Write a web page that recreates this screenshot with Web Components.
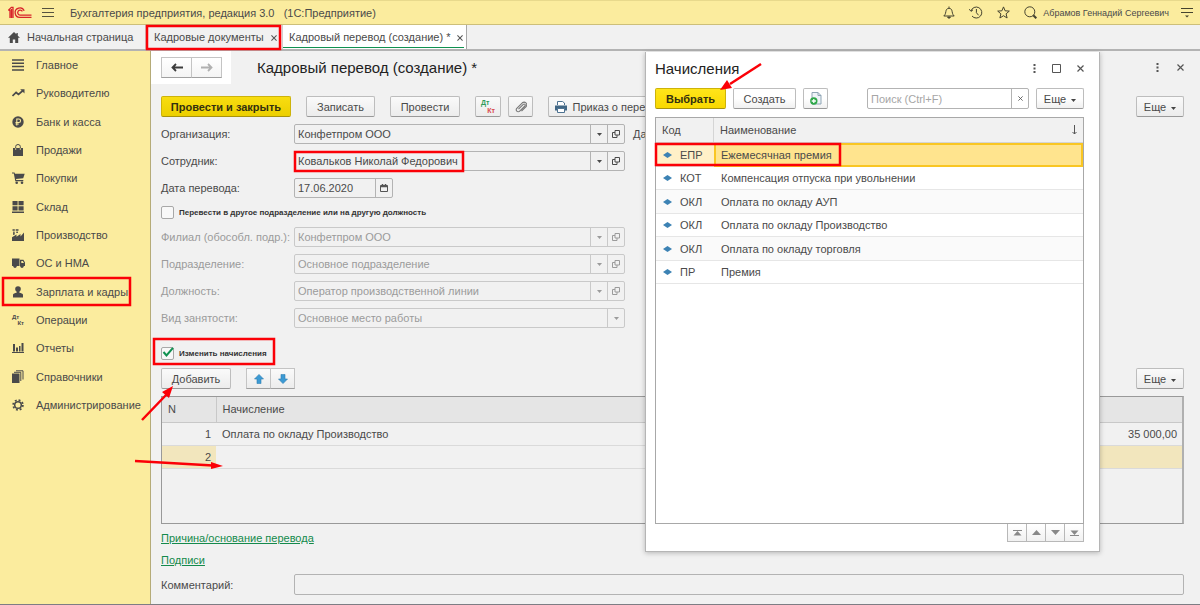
<!DOCTYPE html>
<html lang="ru">
<head>
<meta charset="utf-8">
<title>Бухгалтерия предприятия</title>
<style>
    html, body { margin: 0; }
    body {
        font: 11px/14px "Liberation Sans", Arial, sans-serif;
        color: #4a4a4a;
        --line: #b3b3b3;
        --bg: #f1f1f1;
        --yellow: #fbec9e;
    }
</style>
</head>
<body>
<app-shell>
    <title-bar slot="title"></title-bar>
    <tab-bar slot="tabs"></tab-bar>
    <side-nav slot="nav"></side-nav>
    <transfer-form></transfer-form>
    <accrual-dialog slot="overlay"></accrual-dialog>
    <mark-layer slot="overlay"></mark-layer>
</app-shell>

<script>
const ICONS = {
    logo: '<svg width="24" height="13" viewBox="0 0 24 13" fill="none" stroke="#d8232a" stroke-width="1.300"><path d="M.4 4.300H2V12M.4 4.300 3.400 1.300H5V12M3.500 3V12"/><path d="M16.200 4.800A4.700 4.700 0 1 0 12 11.300H23.500"/><path d="M14.400 5.400A2.500 2.500 0 1 0 12 9.100H23.500"/></svg>',
    burger: '<svg width="12" height="11" viewBox="0 0 12 11" stroke="#55523f"><path d="M0 1.500h12M0 5.500h12M0 9.500h12"/></svg>',
    bell: '<svg width="12" height="13" viewBox="0 0 12 13" fill="none" stroke="#45432f"><path d="M.8 10C2.800 8.500 2.600 6 3.200 4.200 3.700 2.800 4.800 2.400 6 2.400s2.300.400 2.800 1.800c.600 1.800.400 4.300 2.400 5.800ZM6 .5v2"/><path d="M4.500 11h3L6 12.500Z" fill="#45432f"/></svg>',
    history: '<svg width="14" height="13" viewBox="0 0 14 13" fill="none" stroke="#45432f"><path d="M2 5A5.500 5.500 0 1 1 3 10M.3 3.200 2 5.400 4 3.800M7.400 3v3.700l2.200 2.600"/></svg>',
    star: '<svg width="13" height="13" viewBox="0 0 13 13" fill="none" stroke="#45432f"><path d="m6.500.900 1.600 3.900 4.200.300-3.200 2.700 1 4.200-3.600-2.300L2.900 12l1-4.200L.7 5.100l4.200-.3Z"/></svg>',
    search: '<svg width="13" height="13" viewBox="0 0 13 13" fill="none" stroke="#45432f"><circle cx="5.800" cy="5.800" r="5"/><path d="m9.300 9.300 3 3" stroke-width="2"/></svg>',
    settings: '<svg width="12" height="11" viewBox="0 0 12 11" stroke="#45432f"><path d="M0 1.500h12M0 5.500h12"/><path d="M4 8.500h4L6 10.500Z" fill="#45432f" stroke="none"/></svg>',
    home: '<svg width="12" height="11" viewBox="0 0 12 11" fill="#4a4a4a"><path d="M6 0 0 5.800h1.800V11h3V7.500h2.400V11h3V5.800H12L9.800 3.700V1H8.400v1.300Z"/></svg>',
    main: '<svg width="12" height="12" viewBox="0 0 12 12" stroke="#4a4a4a" stroke-width="1.500"><path d="M0 1h12M0 4.300h12M0 7.600h12M0 10.900h12"/></svg>',
    trend: '<svg width="13" height="12" viewBox="0 0 13 12" fill="none" stroke="#4a4a4a" stroke-width="1.700"><path d="m.5 9 3.600-3.500 2.400 2L11 3.500"/><path d="M8.200 2.300h4.300v4.200Z" fill="#4a4a4a" stroke="none"/></svg>',
    ruble: '<svg width="12" height="12" viewBox="0 0 12 12"><circle cx="6" cy="6" r="5.700" fill="#4a4a4a"/><path d="M4.800 9.500V3h2a1.700 1.700 0 0 1 0 3.500H3.500M3.500 8h3.300" fill="none" stroke="#fbec9e" stroke-width="1.100"/></svg>',
    bag: '<svg width="12" height="12" viewBox="0 0 12 12"><path d="M1 4h10v8H1Z" fill="#4a4a4a"/><path d="M3.700 6V2.500a2.300 2 0 0 1 4.600 0V6" fill="none" stroke="#4a4a4a"/><path d="M3.700 4v2M8.300 4v2" stroke="#fbec9e" stroke-width=".7"/></svg>',
    cart: '<svg width="13" height="12" viewBox="0 0 13 12" fill="#4a4a4a"><path d="M0 .5h2.500l.5 1.200h9.700l-1.500 4.600-7.300.700.400 1h7v1.200H3.300L1.800 1.600H0Z"/><circle cx="4.700" cy="10.700" r="1.300"/><circle cx="10" cy="10.700" r="1.300"/></svg>',
    store: '<svg width="12" height="12" viewBox="0 0 12 12" fill="#4a4a4a"><path d="M.5 0h5.100v4.300H.5ZM6.500 0h5.100v4.300H6.500ZM.5 5.200h5.100v4.300H.5ZM6.500 5.200h5.100v4.300H6.500ZM0 10.500h12V12H0Z"/></svg>',
    factory: '<svg width="12" height="12" viewBox="0 0 12 12" fill="#4a4a4a"><path d="M0 12V8.200l4.500-2.700v2.300L8.500 5v2.500L12 3.500V12ZM1 6 1.300 2.500h1.200L2.800 5.500ZM4.200 4l.3-1.500h1.200L6 4ZM.5.300h2.300v1.400H.5ZM3.700.3h2.800v1.400H3.700Z"/></svg>',
    truck: '<svg width="13" height="12" viewBox="0 0 13 12" fill="#4a4a4a"><path d="M0 1.500h7.500V9H0ZM8 2.800h3.400L13 5.500V9H8Z"/><circle cx="3" cy="9.300" r="1.600"/><circle cx="10" cy="9.300" r="1.600"/><path d="M9.300 4h1.500L12 6H9.300Z" fill="#fbec9e"/></svg>',
    person: '<svg width="12" height="12" viewBox="0 0 12 12" fill="#4a4a4a"><circle cx="6" cy="3" r="2.800"/><path d="M1 11.500V8.800C1 7.600 3 7 4.600 6.700V5h2.800v1.700C9 7 11 7.600 11 8.800v2.700Z"/></svg>',
    chart: '<svg width="12" height="12" viewBox="0 0 12 12" fill="#4a4a4a"><path d="M1 2h2v7.500H1ZM4 5.500h2v4H4ZM7 4h1.500v5.500H7ZM9.500 1h2v8.500h-2ZM0 10h12v1H0Z"/></svg>',
    books: '<svg width="12" height="13" viewBox="0 0 12 13" fill="#4a4a4a"><path d="M0 3.500h7.500V13H0Z"/><path d="M2 2.300h6.800V11M4 .8h7v8.700" fill="none" stroke="#4a4a4a"/></svg>',
    gear: '<svg width="12" height="12" viewBox="0 0 12 12" fill="none" stroke="#4a4a4a"><circle cx="6" cy="6" r="3.300" stroke-width="1.500"/><circle cx="6" cy="6" r="4.900" stroke-width="1.700" stroke-dasharray="1.900 1.950"/></svg>',
    back: '<svg width="12" height="9" viewBox="0 0 12 9" fill="none" stroke="#3c3c3c" stroke-width="1.800"><path d="M1.500 4.500H12M5 1 1.500 4.500 5 8"/></svg>',
    forward: '<svg width="12" height="9" viewBox="0 0 12 9" fill="none" stroke="#b0b0b0" stroke-width="1.800"><path d="M0 4.500h10.500M7 1l3.500 3.500L7 8"/></svg>',
    clip: '<svg width="12" height="12" viewBox="0 0 12 12" fill="none" stroke="#777" stroke-width="1.100"><path d="m3.500 8.200 4.800-4.800a1.100 1.100 0 0 1 1.600 1.600L4.700 10.200a2 2 0 0 1-2.900-2.900L7.300 1.800a2.700 2.700 0 0 1 3.800 3.800L6.500 10.200"/></svg>',
    print: '<svg width="12" height="12" viewBox="0 0 12 12"><path d="M2.500 4V.5h5L9.500 2v2" fill="#fff" stroke="#4d7291"/><path d="M0 4.500h12V9.500H0Z" fill="#416785"/><path d="M2.500 7.500h7v4h-7Z" fill="#fff" stroke="#4d7291"/></svg>',
    drop: '<svg width="5" height="3" viewBox="0 0 5 3" fill="currentColor"><path d="M0 0h5L2.500 3Z"/></svg>',
    open: '<svg width="8" height="8" viewBox="0 0 8 8" fill="none" stroke="currentColor"><path d="M3 .5h4.500V5H3ZM3 2.500H.5v5H5V5"/></svg>',
    calendar: '<svg width="8" height="8" viewBox="0 0 8 8" fill="none" stroke="#555"><path d="M.5 1.500h7v6h-7Z"/><path d="M.5 2.500h7M2.500 0v2M5.500 0v2" stroke-width="1.500"/></svg>',
    check: '<svg width="12" height="11" viewBox="0 0 12 11" fill="none" stroke="#0f9150" stroke-width="2"><path d="m1.500 5 3 3.500L11 .8"/></svg>',
    up: '<svg width="10" height="10" viewBox="0 0 10 10" fill="#3c9ad4" stroke="#2b7cb0" stroke-width=".6"><path d="M5 .4 9.500 5H7v4.600H3V5H.5Z"/></svg>',
    down: '<svg width="10" height="10" viewBox="0 0 10 10" fill="#3c9ad4" stroke="#2b7cb0" stroke-width=".6"><path d="M5 9.600.5 5H3V.4h4V5h2.500Z"/></svg>',
    dots: '<svg width="3" height="9" viewBox="0 0 3 9" fill="#555"><path d="M.5 0h2v2h-2ZM.5 3.500h2v2h-2ZM.5 7h2v2h-2Z"/></svg>',
    close: '<svg width="7" height="7" viewBox="0 0 7 7" fill="none" stroke="#555" stroke-width="1.200"><path d="m.5.500 6 6M6.500.500l-6 6"/></svg>',
    max: '<svg width="9" height="9" viewBox="0 0 9 9" fill="none" stroke="#555"><path d="M.5.500h8v8h-8Z"/></svg>',
    copy: '<svg width="12" height="13" viewBox="0 0 12 13"><path d="M2 .5h6L11 3.500v8.500H2Z" fill="#eef3f7" stroke="#8fa5b5"/><path d="M8 .5v3h3" fill="none" stroke="#8fa5b5"/><circle cx="3.800" cy="9" r="3.700" fill="#2fa84a"/><path d="M3.800 6.900v4.200M1.700 9h4.200" stroke="#fff" stroke-width="1.300"/></svg>',
    diamond: '<svg width="9" height="6" viewBox="0 0 9 6" fill="#3c82b4"><path d="M4.500 0 9 3 4.500 6 0 3Z"/></svg>',
    sort: '<svg width="5" height="10" viewBox="0 0 5 10" fill="none" stroke="#555"><path d="M2.500 0v9M.5 7l2 2 2-2"/></svg>',
    first: '<svg width="9" height="6" viewBox="0 0 9 6" fill="#888"><path d="M0 0h9v1H0ZM4.500 1 8.500 5.500h-8Z"/></svg>',
    prev: '<svg width="9" height="5" viewBox="0 0 9 5" fill="#888"><path d="M4.500 0 9 5H0Z"/></svg>',
    next: '<svg width="9" height="5" viewBox="0 0 9 5" fill="#888"><path d="M4.500 5 0 0h9Z"/></svg>',
    last: '<svg width="9" height="6" viewBox="0 0 9 6" fill="#888"><path d="M0 5h9v1H0ZM4.500 5 .5.500h8Z"/></svg>'
};

class BaseElement extends HTMLElement {
    connectedCallback() {
        if (this.shadowRoot) return;
        this.attachShadow({ mode: 'open' }).innerHTML = `
            <style>
                *, :host { box-sizing: border-box; }
                svg { display: block; flex: none; }
                button, input { font: inherit; color: inherit; margin: 0; padding: 0; }
                .plain { border: 0; background: none; display: grid; place-items: center; }
            </style>
            ${this.render()}`;
    }
}

class AppShell extends BaseElement {
    render() {
        return `
            <style>
                :host { display: flex; flex-direction: column; position: relative; min-height: 100vh; background: var(--bg); border-bottom: 1px solid #7d7d84; }
                .body { display: flex; flex: 1; }
                slot:not([name])::slotted(*) { flex: 1; min-width: 0; }
            </style>
            <slot name="title"></slot>
            <slot name="tabs"></slot>
            <div class="body"><slot name="nav"></slot><slot></slot></div>
            <slot name="overlay"></slot>`;
    }
}

class TitleBar extends BaseElement {
    render() {
        return `
            <style>
                :host { display: flex; align-items: center; height: 25px; padding: 0 7px 0 8px; background: var(--yellow); border-top: 1px solid #e8d98c; border-bottom: 1px solid #cdbf79; }
                .menu { margin: 0 16px 0 10px; }
                .name { white-space: pre; flex: 1; }
                .tools { display: flex; gap: 14px; align-items: center; }
                .user { font-size: 9px; margin: 0 -2px 0 -8px; }
            </style>
            ${ICONS.logo}
            <button class="plain menu" aria-label="Меню">${ICONS.burger}</button>
            <span class="name">Бухгалтерия предприятия, редакция 3.0   (1С:Предприятие)</span>
            <div class="tools">
                <button class="plain" aria-label="Уведомления">${ICONS.bell}</button>
                <button class="plain" aria-label="История">${ICONS.history}</button>
                <button class="plain" aria-label="Избранное">${ICONS.star}</button>
                <button class="plain" aria-label="Поиск">${ICONS.search}</button>
                <span class="user">Абрамов Геннадий Сергеевич</span>
                <button class="plain" aria-label="Настройки">${ICONS.settings}</button>
            </div>`;
    }
}

class TabBar extends BaseElement {
    render() {
        return `
            <style>
                :host { display: flex; height: 26px; background: var(--bg); border-bottom: 2px solid var(--line); }
                .tab { display: flex; align-items: center; gap: 7px; padding: 0 8px; border-right: 1px solid #d0d0d0; }
                .home { width: 146px; }
                .docs { width: 137px; padding-right: 9px; }
                .docs span, .active span { flex: 1; white-space: nowrap; }
                .active { width: 184px; padding: 0 6px; border-color: #a8a8a8; background: linear-gradient(#0f9150, #0f9150) 0 22px / 181px 1px no-repeat #fff; }
                .tab .plain svg { width: 6px; height: 6px; margin-top: 2px; }
            </style>
            <div class="tab home">${ICONS.home}<span>Начальная страница</span></div>
            <div class="tab docs"><span>Кадровые документы</span><button class="plain" aria-label="Закрыть">${ICONS.close}</button></div>
            <div class="tab active"><span>Кадровый перевод (создание) *</span><button class="plain" aria-label="Закрыть">${ICONS.close}</button></div>`;
    }
}

class SideNav extends BaseElement {
    render() {
        const items = [
            ['main', 'Главное'], ['trend', 'Руководителю'], ['ruble', 'Банк и касса'], ['bag', 'Продажи'],
            ['cart', 'Покупки'], ['store', 'Склад'], ['factory', 'Производство'], ['truck', 'ОС и НМА'],
            ['person', 'Зарплата и кадры'], ['dtkt', 'Операции'], ['chart', 'Отчеты'], ['books', 'Справочники'],
            ['gear', 'Администрирование']
        ];
        return `
            <style>
                :host { display: block; flex: none; width: 151px; background: var(--yellow); border-right: 1px solid #b5ab78; }
                nav { display: grid; grid-auto-rows: 1fr; min-height: 368px; }
                a { display: flex; align-items: center; gap: 12px; padding-left: 12px; color: inherit; text-decoration: none; }
                .pic { width: 12px; flex: none; }
                .dtkt { font: bold 6px/6px "Liberation Sans", Arial, sans-serif; }
                .dtkt i { display: block; font-style: normal; text-align: right; }
                .dtkt i:first-child { text-align: left; }
            </style>
            <nav>${items.map(([icon, text]) => `
                <a href="#"><span class="pic ${icon}">${ICONS[icon] || '<i>Дт</i><i>Кт</i>'}</span>${text}</a>`).join('')}
            </nav>`;
    }
}

class ToolButton extends BaseElement {
    render() {
        const icon = this.getAttribute('icon');
        return `
            <style>
                :host { display: inline-block; flex: none; }
                button {
                    display: flex; align-items: center; justify-content: center; gap: 6px;
                    width: 100%; height: 21px; white-space: nowrap;
                    border: 1px solid #bdbdbd; border-bottom-color: #999; border-radius: 2px;
                    background: linear-gradient(#fafafa, #ececec);
                }
                :host([primary]) button {
                    font-weight: bold; color: #33300f; border-color: #cdb30a; border-bottom-color: #a8930c;
                    background: linear-gradient(#f8dd10, #eccf00);
                }
                :host([bright]) button { background: linear-gradient(#ffe51a, #f9d800); }
                :host([white]) button { background: linear-gradient(#fff 50%, #f0f0f0); }
                :host([more]) { width: 48px; }
                .caret { margin: 3px 0 0 -1px; color: #444; }
            </style>
            <button aria-label="${this.getAttribute('hint') || this.textContent.trim()}">${icon ? ICONS[icon] : ''}<slot></slot>${this.hasAttribute('more') ? `<span class="caret">${ICONS.drop}</span>` : ''}</button>`;
    }
}

class FormField extends BaseElement {
    render() {
        const off = this.hasAttribute('off') ? 'disabled' : '';
        const actions = (this.getAttribute('actions') || '').split(' ').filter(Boolean);
        return `
            <style>
                :host { display: grid; grid-template-columns: 133px minmax(0, 1fr); align-items: center; }
                :host([off]) { color: #9b9b9b; --line: #c9c9c9; }
                .box { display: flex; height: 20px; border: 1px solid var(--line); border-radius: 2px; }
                input { flex: 1; min-width: 0; width: 0; border: 0; background: none; padding: 0 3px; outline: 0; }
                :host([tall]) .box { height: 21px; }
                .box button { width: 17px; border-left: 1px solid var(--line); }
            </style>
            <label for="f">${this.getAttribute('label')}</label>
            <div class="box">
                <input id="f" value="${this.getAttribute('value') || ''}" ${off}>
                ${actions.map(a => `<button class="plain" aria-label="${a}" ${off}>${ICONS[a]}</button>`).join('')}
            </div>`;
    }
}

class CheckField extends BaseElement {
    render() {
        return `
            <style>
                :host { display: block; }
                label { display: flex; align-items: center; gap: 5px; font: bold 8px/13px "Liberation Sans", Arial, sans-serif; color: #333; }
                .box { display: grid; }
                .box > * { grid-area: 1 / 1; }
                input { appearance: none; width: 13px; height: 13px; border: 1px solid #a8a8a8; border-radius: 2px; background: #f8f8f8; }
                svg { display: none; pointer-events: none; margin-left: 1px; }
                input:checked + svg { display: block; }
            </style>
            <label><span class="box"><input type="checkbox" ${this.hasAttribute('checked') ? 'checked' : ''}>${ICONS.check}</span><slot></slot></label>`;
    }
}

class TransferForm extends BaseElement {
    render() {
        return `
            <style>
                :host { display: block; padding: 0 16px 8px 10px; }
                header { display: flex; align-items: center; height: 33px; margin-left: -10px; }
                .history { align-self: stretch; background: #fff; padding: 6px 9px 6px 10px; display: flex; }
                .history button, .move button { width: 31px; height: 21px; border: 1px solid #c4c4c4; border-bottom-color: #a0a0a0; background: linear-gradient(#fff, #f4f4f4); }
                .history button + button, .move button + button { margin-left: -1px; }
                h1 { flex: 1; margin: 0 0 0 26px; font: 15px/20px "Liberation Sans", Arial, sans-serif; color: #222; }
                .win { display: flex; gap: 18px; }
                .bar { display: flex; }
                .bar tool-button + tool-button { margin-left: 15px; }
                .top { margin: 12px 0 7px; }
                .bar .near { margin-left: 7px !important; }
                .bar [more] { margin-left: auto !important; }
                .dtkt { font: bold 7px/8px "Liberation Sans", Arial, sans-serif; color: #2f9c5a; display: block; width: 14px; text-align: left; }
                .dtkt i { display: block; font-style: normal; text-align: right; color: #d9484c; line-height: 7px; }
                .fields { display: grid; gap: 7px; }
                .fields form-field { max-width: 464px; }
                .off { margin: 8px 0 19px; }
                .row { display: grid; grid-template-columns: 464px 1fr; gap: 8px; align-items: center; }
                .fields .date { max-width: 232px; }
                .off check-field { margin-bottom: 1px; }
                .lines { margin: 8px 0 7px; }
                .move { display: flex; margin-left: 15px; }
                .move button { width: 25px; background: linear-gradient(#fafafa, #ececec); }
                .frame { height: 128px; border: 1px solid #999; border-right: 2px solid #b0b0b0; }
                table { width: 100%; border-collapse: collapse; table-layout: fixed; }
                th { height: 25px; background: #e5e5e5; font-weight: normal; text-align: left; border-bottom: 1px solid #c8c8c8; padding: 0 6px; }
                td { height: 23px; padding: 0 5px 0 6px; border-bottom: 1px solid #dadada; }
                th:first-child { border-right: 1px solid #c8c8c8; }
                td:first-child, td:last-child { text-align: right; }
                .current td { background: #f2e6bd; }
                .current td:nth-child(2) { background: none; }
                .links { display: grid; gap: 8px; justify-items: start; margin: 7px 0; }
                a { color: #148a4c; }
            </style>
            <header>
                <div class="history"><button class="plain" aria-label="Назад">${ICONS.back}</button><button class="plain" aria-label="Вперед">${ICONS.forward}</button></div>
                <h1>Кадровый перевод (создание) *</h1>
                <div class="win"><button class="plain" aria-label="Действия">${ICONS.dots}</button><button class="plain" aria-label="Закрыть">${ICONS.close}</button></div>
            </header>
            <div class="bar top">
                <tool-button primary style="width:130px">Провести и закрыть</tool-button>
                <tool-button style="width:69px">Записать</tool-button>
                <tool-button style="width:70px">Провести</tool-button>
                <tool-button style="width:26px" hint="Проводки"><span class="dtkt">Дт<i>Кт</i></span></tool-button>
                <tool-button class="near" style="width:25px" icon="clip" hint="Файлы"></tool-button>
                <tool-button icon="print" style="width:128px">Приказ о переводе</tool-button>
                <tool-button more>Еще</tool-button>
            </div>
            <div class="fields">
                <div class="row">
                    <form-field label="Организация:" value="Конфетпром ООО" actions="drop open"></form-field>
                    <span>Дата:</span>
                </div>
                <form-field label="Сотрудник:" value="Ковальков Николай Федорович" actions="drop open"></form-field>
                <form-field class="date" label="Дата перевода:" value="17.06.2020" actions="calendar"></form-field>
            </div>
            <div class="fields off">
                <check-field>Перевести в другое подразделение или на другую должность</check-field>
                <form-field off label="Филиал (обособл. подр.):" value="Конфетпром ООО" actions="drop open"></form-field>
                <form-field off label="Подразделение:" value="Основное подразделение" actions="drop open"></form-field>
                <form-field off label="Должность:" value="Оператор производственной линии" actions="drop open"></form-field>
                <form-field off label="Вид занятости:" value="Основное место работы" actions="drop"></form-field>
            </div>
            <check-field checked>Изменить начисления</check-field>
            <div class="bar lines">
                <tool-button style="width:70px">Добавить</tool-button>
                <div class="move"><button class="plain" aria-label="Вверх">${ICONS.up}</button><button class="plain" aria-label="Вниз">${ICONS.down}</button></div>
                <tool-button more>Еще</tool-button>
            </div>
            <div class="frame">
                <table>
                    <colgroup><col style="width:54px"><col><col style="width:45%"></colgroup>
                    <thead><tr><th>N</th><th>Начисление</th><th></th></tr></thead>
                    <tbody>
                        <tr><td>1</td><td>Оплата по окладу Производство</td><td>35 000,00</td></tr>
                        <tr class="current"><td>2</td><td></td><td></td></tr>
                    </tbody>
                </table>
            </div>
            <div class="links"><a href="#">Причина/основание перевода</a><a href="#">Подписи</a></div>
            <form-field tall label="Комментарий:"></form-field>`;
    }
}

class AccrualDialog extends BaseElement {
    render() {
        const rows = [
            ['ЕПР', 'Ежемесячная премия'], ['КОТ', 'Компенсация отпуска при увольнении'],
            ['ОКЛ', 'Оплата по окладу АУП'], ['ОКЛ', 'Оплата по окладу Производство'],
            ['ОКЛ', 'Оплата по окладу торговля'], ['ПР', 'Премия']
        ];
        return `
            <style>
                :host {
                    display: block; position: absolute; top: 52px; right: 100px; width: 455px;
                    padding: 6px 15px 9px 9px; background: #fff; border: 1px solid #b5b5b5; border-top: 0;
                    box-shadow: 0 1px 5px rgba(0, 0, 0, .25);
                }
                header { display: flex; align-items: center; height: 21px; }
                h2 { flex: 1; margin: 0; font: 15px/20px "Liberation Sans", Arial, sans-serif; color: #222; }
                .win { display: flex; align-items: center; gap: 16px; }
                .bar { display: flex; gap: 7px; margin: 9px 0 8px; }
                .search { display: flex; margin-left: auto; width: 162px; height: 21px; border: 1px solid var(--line); border-radius: 2px; }
                .search input { flex: 1; width: 0; border: 0; padding: 0 3px; outline: 0; background: none; }
                .search input::placeholder { color: #a6a6a6; }
                .search button { width: 17px; border-left: 1px solid var(--line); }
                .search svg { width: 5px; }
                .frame { height: 407px; border: 1px solid #a8a8a8; }
                table { width: 100%; border-collapse: separate; border-spacing: 0; table-layout: fixed; }
                th { height: 25px; padding: 0 6px; background: #f1f1f1; font-weight: normal; text-align: left; border-bottom: 1px solid #d5d5d5; }
                th:first-child { border-right: 1px solid #d5d5d5; }
                .head { display: flex; justify-content: space-between; align-items: center; }
                td { height: 23px; padding: 0 7px; border-bottom: 1px solid #e6e6e6; }
                tr:nth-child(odd) td { height: 24px; }
                tr:nth-child(odd):not(.current) td { background: #fafafa; }
                .code { display: flex; align-items: center; gap: 8px; }
                .current td:first-child { background: #fff0c8; }
                .current td:last-child { background: #ffe48e; border: 2px solid #f9c623; padding: 0 5px; }
                .pager { display: flex; justify-content: flex-end; }
                .pager button { width: 20px; height: 18px; margin-left: -1px; border: 1px solid #b8b8b8; border-top: 0; background: linear-gradient(#fff, #f1f1f1); }
            </style>
            <header>
                <h2>Начисления</h2>
                <div class="win">
                    <button class="plain" aria-label="Действия">${ICONS.dots}</button>
                    <button class="plain" aria-label="Развернуть">${ICONS.max}</button>
                    <button class="plain" aria-label="Закрыть">${ICONS.close}</button>
                </div>
            </header>
            <div class="bar">
                <tool-button primary bright style="width:71px">Выбрать</tool-button>
                <tool-button white style="width:63px">Создать</tool-button>
                <tool-button white icon="copy" style="width:25px" hint="Скопировать"></tool-button>
                <div class="search"><input type="text" placeholder="Поиск (Ctrl+F)" aria-label="Поиск"><button class="plain" aria-label="Очистить">${ICONS.close}</button></div>
                <tool-button white more>Еще</tool-button>
            </div>
            <div class="frame">
                <table>
                    <colgroup><col style="width:58px"><col></colgroup>
                    <thead><tr><th>Код</th><th><div class="head">Наименование${ICONS.sort}</div></th></tr></thead>
                    <tbody>${rows.map(([code, name], i) => `
                        <tr${i ? '' : ' class="current"'}><td><div class="code">${ICONS.diamond}${code}</div></td><td>${name}</td></tr>`).join('')}
                    </tbody>
                </table>
            </div>
            <div class="pager">
                <button class="plain" aria-label="В начало">${ICONS.first}</button>
                <button class="plain" aria-label="Назад">${ICONS.prev}</button>
                <button class="plain" aria-label="Вперед">${ICONS.next}</button>
                <button class="plain" aria-label="В конец">${ICONS.last}</button>
            </div>`;
    }
}

// red frames and arrows drawn over the window
class MarkLayer extends BaseElement {
    render() {
        return `
            <style>
                :host { display: block; position: absolute; inset: 0; pointer-events: none; overflow: hidden; }
                svg { position: absolute; }
                .right { right: 0; }
            </style>
            <svg width="500" height="500" fill="none" stroke="#fb0007" stroke-width="2.500">
                <rect x="147" y="26" width="133" height="23"/>
                <rect x="295" y="152" width="168" height="19"/>
                <rect x="3" y="278" width="127" height="27"/>
                <rect x="154" y="339" width="120" height="25"/>
                <path d="m142 420 25-26M135 461l78 4.500"/>
                <path d="m173 386-4 12-7-6ZM223 466l-12 3v-7Z" fill="#fb0007" stroke="none"/>
            </svg>
            <svg class="right" width="555" height="200" fill="none" stroke="#fb0007" stroke-width="2.500">
                <rect x="11" y="144" width="184" height="21"/>
                <path d="m116 64-31 20"/>
                <path d="m75 90 7-10 5 8Z" fill="#fb0007" stroke="none"/>
            </svg>`;
    }
}

customElements.define('app-shell', AppShell);
customElements.define('title-bar', TitleBar);
customElements.define('tab-bar', TabBar);
customElements.define('side-nav', SideNav);
customElements.define('tool-button', ToolButton);
customElements.define('form-field', FormField);
customElements.define('check-field', CheckField);
customElements.define('transfer-form', TransferForm);
customElements.define('accrual-dialog', AccrualDialog);
customElements.define('mark-layer', MarkLayer);
</script>
</body>
</html>
